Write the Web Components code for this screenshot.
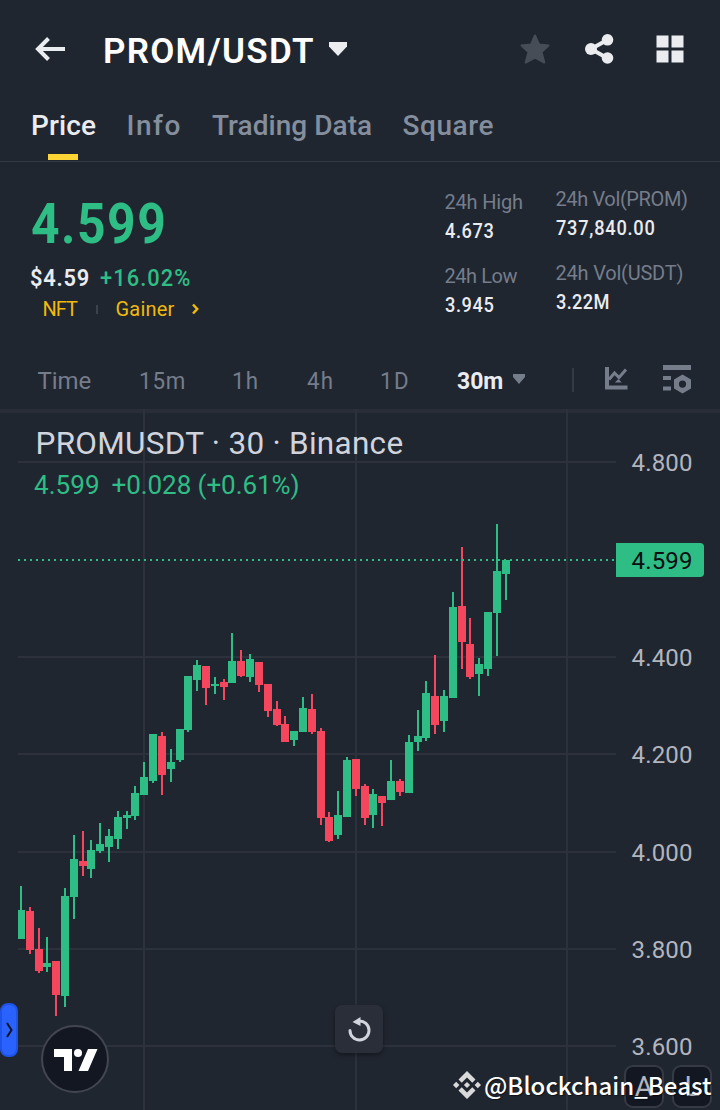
<!DOCTYPE html>
<html lang="en">
<head>
<meta charset="utf-8">
<title>PROM/USDT</title>
<style>
  html, body { margin: 0; background: #202630; }
  body { width: 720px; height: 1110px; overflow: hidden; font-family: Roboto, "Liberation Sans", sans-serif; color: #eaecef; }
</style>
</head>
<body>
<market-page></market-page>

<script>
const define = (name, html, setup) => {
  const template = document.createElement('template');
  template.innerHTML = html;

  customElements.define(name, class extends HTMLElement {
    connectedCallback() {
      if (this.shadowRoot) return;

      this.attachShadow({ mode: 'open' }).appendChild(template.content.cloneNode(true));
      if (setup) setup(this, this.shadowRoot);
    }
  });
};

// A single line of text tracked so that its glyphs span exactly `fit` pixels.
// `squeeze` narrows the glyphs themselves.
customElements.define('fit-text', class extends HTMLElement {
  connectedCallback() {
    if (this.shadowRoot) return;

    this.attachShadow({ mode: 'open' }).innerHTML = `
      <style>
        :host { display: flex; flex: none; }
        span { display: block; flex: none; white-space: pre; transform-origin: 0 50%; }
      </style>
      <span><slot></slot></span>`;

    const text = this.textContent;
    const fit = Number(this.getAttribute('fit'));
    const squeeze = Number(this.getAttribute('squeeze') || 1);
    const { fontWeight, fontSize, fontFamily } = getComputedStyle(this);
    const ctx = document.createElement('canvas').getContext('2d');
    ctx.font = `${fontWeight} ${fontSize} ${fontFamily}`;
    const m = ctx.measureText(text);
    const ink = m.actualBoundingBoxLeft + m.actualBoundingBoxRight;
    const span = this.shadowRoot.querySelector('span');

    this.style.width = `${fit}px`;
    span.style.letterSpacing = `${(fit / squeeze - ink) / (text.length - 1)}px`;
    span.style.marginLeft = `${m.actualBoundingBoxLeft * squeeze}px`;
    if (squeeze !== 1) span.style.transform = `scaleX(${squeeze})`;
  }
});

define('page-header', `
  <style>
    :host { display: flex; align-items: center; height: 98px; box-sizing: border-box; padding: 0 35px; }
    fit-text { font-size: 35px; font-weight: 600; line-height: 40px; margin: 5px 16px 0 40px; color: #fff; }
    svg { display: block; flex: none; }
    .star { margin-left: auto; }
    .share { margin-left: 35px; }
    .grid { margin: 0 1px 0 41px; }
  </style>
  <svg width="30" height="26" fill="none" stroke="#eaecef" stroke-width="4"><path d="M30 13H3M13.500 2.500L3 13l10.500 10.500"/></svg>
  <fit-text fit="208">PROM/USDT</fit-text>
  <svg width="18" height="14" style="margin-top:-1px"><path d="M0 0h18v4.500L9 14 0 4.500z" fill="#eaecef"/></svg>
  <svg class="star" width="30" height="30"><path d="M15 1.500l4 9 9.500 1-7 6.500 2.800 10.500L15 23.500 5.700 28.500 8.500 18l-7-6.500 9.500-1z" fill="#474d57" stroke="#474d57" stroke-width="2" stroke-linejoin="round"/></svg>
  <svg class="share" width="30" height="30" fill="#eaecef"><path d="M6 15L23 5.500M6 15l17 9.500" stroke="#eaecef" stroke-width="4"/><circle cx="6" cy="15" r="6"/><circle cx="22.500" cy="5.800" r="5.800"/><circle cx="22.500" cy="24" r="5.800"/></svg>
  <svg class="grid" width="28" height="28" fill="#eaecef"><path d="M.5.500h12v12H.5zM15.500.500h12v12h-12zM.5 15.500h12v12H.5zM15.500 15.500h12v12h-12z"/></svg>
`);

define('page-tabs', `
  <style>
    :host { display: flex; gap: 32.5px; height: 64px; box-sizing: border-box; padding-left: 33px; border-bottom: 1px solid #333b47; }
    fit-text { font-size: 28px; line-height: 56px; font-weight: 500; color: #848e9c; }
    .active { color: #eaecef; }
    .tab { position: relative; }
    .tab::after { content: ""; position: absolute; left: 15px; bottom: 1px; width: 30px; height: 6px; background: #fcd535; }
  </style>
  <div class="tab"><fit-text class="active" fit="63">Price</fit-text></div>
  <fit-text fit="51">Info</fit-text>
  <fit-text fit="159">Trading Data</fit-text>
  <fit-text fit="90">Square</fit-text>
`);

define('market-stat', `
  <style>
    :host { display: block; }
    ::slotted([slot=label]) { font-size: 20px; line-height: 28px; color: #757d8b; }
    ::slotted([slot=value]) { font-size: 20px; line-height: 30px; font-weight: 500; color: #eaecef; }
  </style>
  <slot name="label"></slot>
  <slot name="value"></slot>
`);

define('price-summary', `
  <style>
    :host { display: flex; height: 190px; box-sizing: border-box; padding-top: 31px; }
    .quote { width: 413px; padding-left: 32px; box-sizing: border-box; }
    .price { font-size: 56px; line-height: 62px; margin-bottom: -2px; font-weight: 700; color: #2ebd85; }
    .row, .tags { display: flex; align-items: center; }
    .row { gap: 11px; margin: 9px 0 0 -1px; font-size: 23.5px; line-height: 32px; font-weight: 600; }
    .up { color: #2ebd85; font-weight: 500; }
    .tags { font-size: 20px; line-height: 31px; color: #f0b90b; padding-left: 11.5px; }
    .tags i { width: 1.500px; height: 9px; background: #3b424e; margin: 0 19px 0 18px; }
    .stats { display: grid; grid-template-columns: 111px auto; margin-left: 31.500px; }
    .col { display: flex; flex-direction: column; gap: 16px; margin-top: -5px; }
    .col + .col { margin-top: -8px; }
    svg { margin-left: 17px; }
  </style>
  <div class="quote">
    <fit-text class="price" fit="132" squeeze=".89">4.599</fit-text>
    <div class="row"><fit-text fit="58" squeeze=".93">$4.59</fit-text><fit-text class="up" fit="90" squeeze=".93">+16.02%</fit-text></div>
    <div class="tags"><fit-text fit="34.5">NFT</fit-text><i></i><fit-text fit="58">Gainer</fit-text><svg width="7" height="12" style="margin-top:-1px" fill="none" stroke="#f0b90b" stroke-width="2.500"><path d="M1 1.500L5.200 6 1 10.500"/></svg></div>
  </div>
  <div class="stats">
    <div class="col">
      <market-stat><fit-text slot="label" fit="77.500">24h High</fit-text><fit-text slot="value" fit="48.500" squeeze=".91">4.673</fit-text></market-stat>
      <market-stat><fit-text slot="label" fit="73">24h Low</fit-text><fit-text slot="value" fit="48.500" squeeze=".91">3.945</fit-text></market-stat>
    </div>
    <div class="col">
      <market-stat><fit-text slot="label" fit="131.500">24h Vol(PROM)</fit-text><fit-text slot="value" fit="98.500" squeeze=".91">737,840.00</fit-text></market-stat>
      <market-stat><fit-text slot="label" fit="127">24h Vol(USDT)</fit-text><fit-text slot="value" fit="53" squeeze=".91">3.22M</fit-text></market-stat>
    </div>
  </div>
`);

define('interval-bar', `
  <style>
    :host { display: flex; align-items: center; gap: 50px; height: 57px; box-sizing: border-box; padding: 0 29px 0 37.5px; }
    fit-text { font-size: 24px; line-height: 57px; margin-top: 2px; color: #757d8b; }
    .active { font-weight: 700; color: #eaecef; margin-left: -2px; }
    .more { margin-left: -40px; }
    .tools { display: flex; align-items: center; margin-left: -2.500px; }
    .tools i { width: 1.500px; height: 24px; background: #343b47; margin: -2px 31px 0 0; }
    .tools, svg { flex: none; }
    svg { display: block; }
  </style>
  <fit-text fit="53">Time</fit-text>
  <fit-text fit="43.500" squeeze=".93">15m</fit-text>
  <fit-text fit="23" squeeze=".93">1h</fit-text>
  <fit-text fit="25" squeeze=".93">4h</fit-text>
  <fit-text fit="26" squeeze=".93" style="margin-right:1px">1D</fit-text>
  <fit-text class="active" fit="45.500" squeeze=".96">30m</fit-text>
  <svg class="more" width="12" height="10" style="margin-top:-4px"><path d="M0 0h12v3L6 10 0 3z" fill="#757d8b"/></svg>
  <div class="tools">
    <i></i>
    <svg width="23" height="23" style="margin:-4px 35.500px 0 0" fill="none" stroke="#757d8b"><path d="M2 0v20.500h20.500" stroke-width="4"/><path d="M4 12.500L9.500 6l4.500 4.500L21 2.500" stroke-width="3"/><path d="M13.300 12l3.500 3.500h-7z" fill="#757d8b" stroke="none"/></svg>
    <svg width="28" height="30" style="margin-top:-3px" fill="#757d8b"><path d="M0 1h28v5H0zM0 12h8v4H0zM0 22.500h8v4H0z"/><path fill-rule="evenodd" d="M19.500 10.500l8.500 5v9l-8.500 5-8.500-5v-9zm0 6a3.600 3.600 0 100 7.200 3.600 3.600 0 000-7.200z"/></svg>
  </div>
`);

// x, high, body top, body bottom, low, 1 = up
const candles = [
  [21, 886, 910, 939, 939, 1], [30, 907, 911, 950, 954, 0], [39, 928, 949, 971, 973, 0],
  [47, 937, 963, 967, 972, 1], [56, 961, 961, 995, 1016, 0], [65, 888, 896, 996, 1007, 1],
  [74, 835, 859, 897, 919, 1], [83, 831, 861, 866, 876, 0], [91, 840, 850, 869, 878, 1],
  [100, 823, 844, 851, 853, 1], [109, 829, 836, 847, 862, 1], [118, 811, 817, 839, 849, 1],
  [127, 811, 815, 818, 829, 1], [135, 786, 793, 816, 820, 1], [144, 762, 777, 795, 795, 1],
  [153, 734, 734, 781, 783, 1], [162, 732, 736, 775, 795, 0], [171, 749, 762, 769, 782, 1],
  [180, 729, 729, 760, 762, 1], [188, 676, 676, 730, 732, 1], [197, 660, 665, 680, 691, 1],
  [206, 666, 666, 688, 705, 0], [215, 677, 684, 686, 694, 1], [224, 679, 682, 687, 700, 0],
  [232, 633, 661, 683, 683, 1], [241, 650, 661, 676, 677, 0], [250, 654, 659, 677, 682, 1],
  [259, 662, 662, 685, 692, 0], [268, 684, 684, 711, 717, 0], [277, 701, 709, 725, 726, 0],
  [285, 716, 724, 742, 742, 0], [294, 731, 731, 740, 746, 1], [303, 697, 708, 732, 732, 1],
  [312, 694, 709, 732, 734, 0], [321, 728, 731, 818, 825, 0], [329, 812, 817, 841, 842, 0],
  [338, 791, 815, 835, 839, 1], [347, 757, 760, 817, 817, 1], [356, 759, 759, 789, 796, 0],
  [365, 784, 786, 818, 825, 0], [373, 789, 794, 815, 828, 1], [382, 796, 796, 803, 826, 0],
  [391, 760, 781, 800, 800, 1], [400, 779, 781, 792, 796, 0], [409, 735, 742, 793, 793, 1],
  [418, 710, 736, 742, 751, 1], [426, 681, 693, 738, 741, 1], [435, 655, 696, 725, 734, 0],
  [444, 690, 696, 721, 732, 1], [453, 592, 607, 698, 698, 1], [462, 547, 606, 642, 669, 0],
  [470, 618, 644, 677, 679, 0], [479, 658, 664, 674, 696, 1], [488, 612, 612, 669, 676, 1],
  [497, 524, 571, 613, 656, 1], [506, 560, 560, 574, 600, 1]
];

const prices = [[462, '4.800'], [657, '4.400'], [754, '4.200'], [852, '4.000'], [949, '3.800'], [1046, '3.600']];

define('candle-chart', `
  <style>
    :host { display: block; }
    svg { display: block; }
    text { font-size: 24px; fill: #b2b5be; }
  </style>
  <svg width="720" height="701" viewBox="0 409 720 701">
    <rect y="409" width="720" height="4" fill="#282d37"/>
    <g class="lines" stroke="#2c313b" stroke-width="2" shape-rendering="crispEdges"></g>
    <g class="candles" shape-rendering="crispEdges"></g>
    <path d="M18 560H616" stroke="#2ebd85" stroke-width="2" stroke-dasharray="2 4"/>
    <g class="scale"></g>
    <path d="M616 543h84a4 4 0 014 4v26a4 4 0 01-4 4h-84z" fill="#2ebd85"/>
    <text x="631.5" y="569" textLength="61" style="fill:#0c0e12">4.599</text>
  </svg>
`, (host, root) => {
  const lines = [144, 356, 567].map(x => `<path d="M${x} 409V1110"/>`);

  root.querySelector('.lines').innerHTML = lines.concat(prices.map(([y]) => `<path d="M18 ${y}H616"/>`)).join('');
  root.querySelector('.scale').innerHTML = prices.map(([y, label]) =>
    `<text x="631.5" y="${y + 9}" textLength="61">${label}</text>`).join('');
  root.querySelector('.candles').innerHTML = candles.map(([x, high, top, bottom, low, up]) => {
    const left = Math.max(18, x - 4);

    return `<path fill="${up ? '#2ebd85' : '#f6465d'}" d="M${x - 1} ${high}h2V${low}h-2zM${left} ${top}H${x + 4}V${bottom}H${left}z"/>`;
  }).join('');
});

define('chart-key', `
  <style>
    :host { display: flex; align-items: center; justify-content: center; box-sizing: border-box; width: 40px; height: 43px; border: 2px solid #363a45; border-radius: 9px; background: #131722; color: #b2b5be; font-size: 28px; line-height: 40px; }
  </style>
  <slot></slot>
`);

define('chart-panel', `
  <style>
    :host { display: block; position: relative; height: 701px; }
    .legend, .drawer, .logo, .reset, .keys, .mark { position: absolute; }
    .legend { left: 37.500px; top: 14px; }
    .title { font-size: 31.500px; line-height: 41px; color: #d1d4dc; }
    .values { display: flex; gap: 13.500px; margin: 2px 0 0 -3.500px; font-size: 26px; line-height: 39px; color: #2ebd85; }
    .drawer { left: 0; top: 594px; width: 18px; height: 54px; box-sizing: border-box; border: 2px solid #1e53e5; border-radius: 8px; background: #2962ff; }
    .logo { left: 41px; top: 616px; width: 68px; height: 68px; box-sizing: border-box; border: 2px solid #434651; border-radius: 50%; background: #131722; }
    .reset { left: 335px; top: 596px; width: 48px; height: 48px; border-radius: 7px; background: #2a2e39; box-shadow: 0 2px 5px #0006; }
    .keys { left: 624px; top: 656px; display: flex; gap: 8px; }
    .mark { left: 453px; top: 659px; display: flex; align-items: center; gap: 4px; font: 500 24px/34px "Noto Sans CJK SC", sans-serif; color: #fff; text-shadow: 1px 1px 1px #0008; }
    svg { display: block; }
  </style>
  <candle-chart></candle-chart>
  <div class="legend">
    <fit-text class="title" fit="365.500">PROMUSDT · 30 · Binance</fit-text>
    <div class="values"><fit-text fit="64">4.599</fit-text><fit-text fit="187">+0.028 (+0.61%)</fit-text></div>
  </div>
  <div class="drawer"><svg width="14" height="50" fill="none" stroke="#10141d" stroke-width="2"><path d="M5 18l4.500 7L5 32"/></svg></div>
  <div class="logo"><svg width="64" height="64" fill="#fff"><path d="M11 22h18v22h-8V30H11zM45 22h9.500L45 44h-9.500z"/><circle cx="35" cy="26" r="4"/></svg></div>
  <div class="reset"><svg width="48" height="48" fill="none"><path d="M15 25.500a9.500 9.500 0 1 0 9-9.500" stroke="#d1d4dc" stroke-width="3" stroke-linecap="round"/><path d="M17.500 17l8-5v9z" fill="#d1d4dc"/></svg></div>
  <div class="keys"><chart-key>A</chart-key><chart-key>L</chart-key></div>
  <div class="mark">
    <svg width="28" height="28" fill="#d9d9d9"><path d="M14 0l8.500 8.500-3.200 3.200L14 6.400l-5.300 5.300-3.200-3.200zM14 28l8.500-8.500-3.200-3.200-5.300 5.300-5.300-5.300-3.200 3.200zM14 10.900l3.100 3.100-3.100 3.100-3.100-3.100zM3.200 10.800L6.400 14l-3.200 3.200L0 14zM24.800 10.800L28 14l-3.200 3.200-3.200-3.200z"/></svg>
    <fit-text fit="227">@Blockchain_Beast</fit-text>
  </div>
`);

define('market-page', `
  <style>
    :host { display: flex; flex-direction: column; width: 720px; height: 1110px; background: #202630; }
  </style>
  <page-header></page-header>
  <page-tabs></page-tabs>
  <price-summary></price-summary>
  <interval-bar></interval-bar>
  <chart-panel></chart-panel>
`);
</script>
</body>
</html>
